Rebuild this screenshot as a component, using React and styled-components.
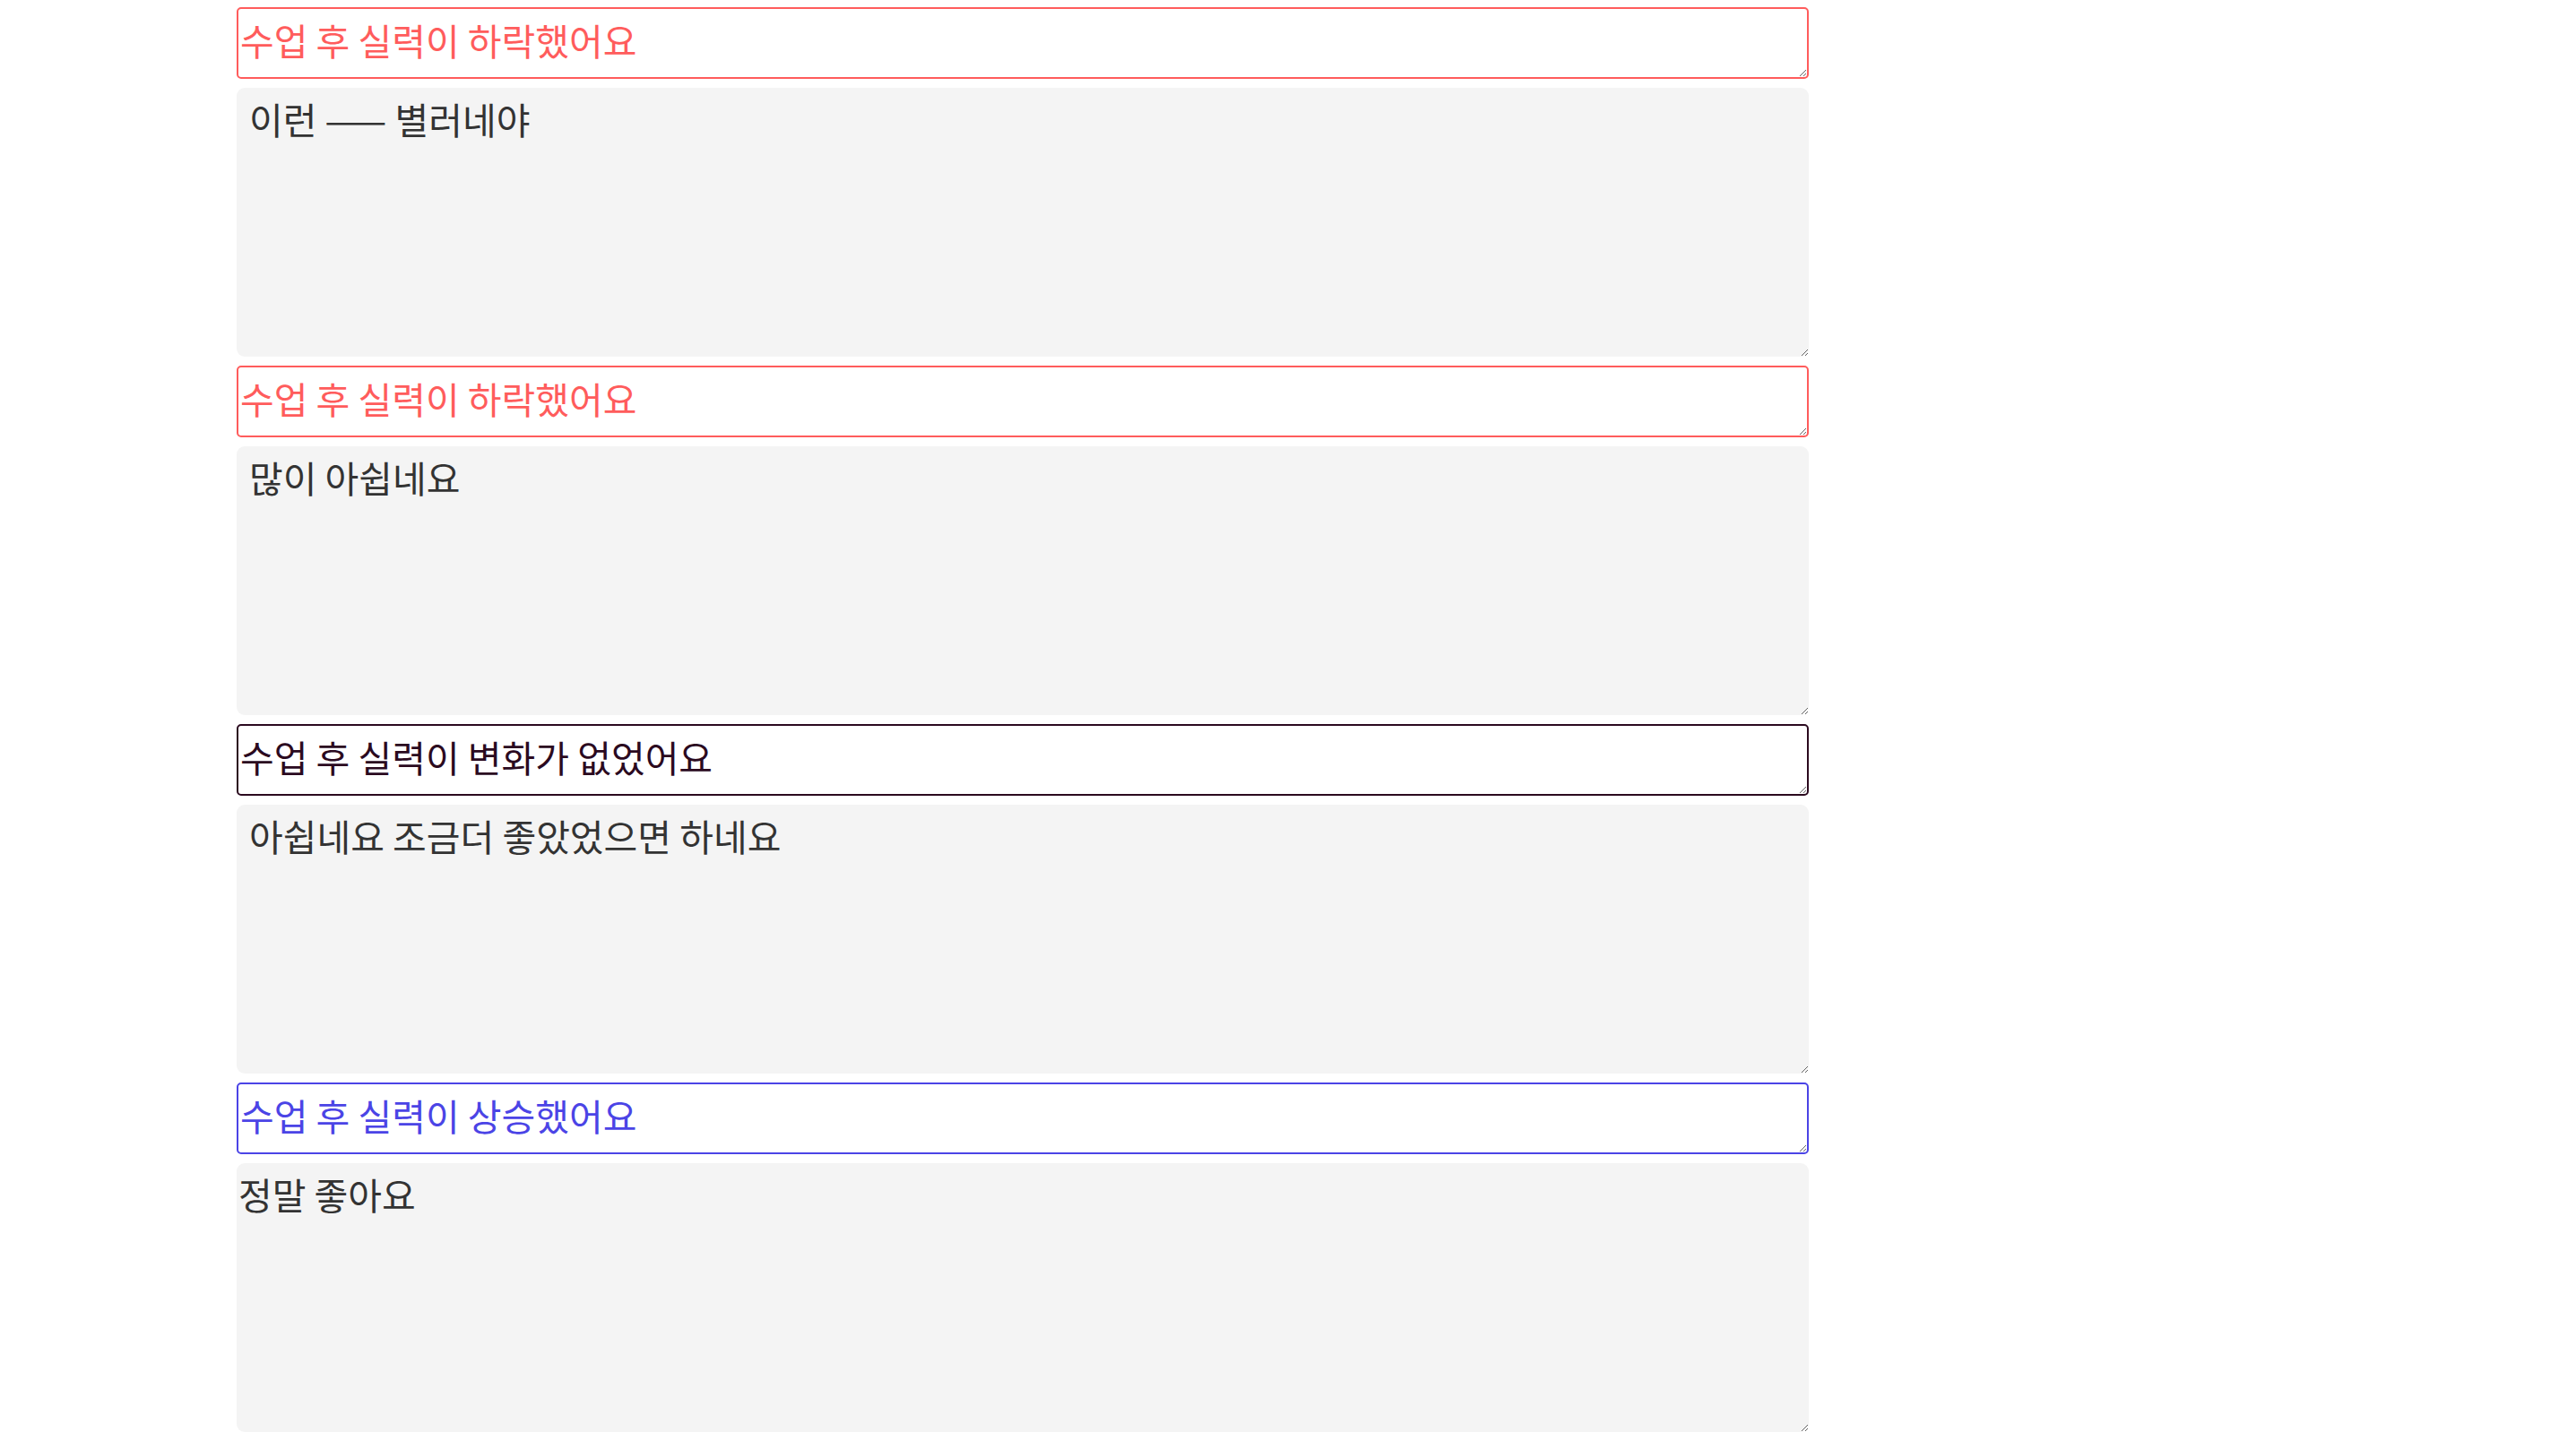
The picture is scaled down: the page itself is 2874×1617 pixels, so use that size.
import React from "react";
import styled, { createGlobalStyle } from "styled-components";

const GlobalStyle = createGlobalStyle`
  html, body { background: #ffffff; }
  body {
    margin: 8px;
    font-family: "Noto Sans CJK KR", "Noto Sans", sans-serif;
  }
`;

const List = styled.div`
  display: flex;
  flex-direction: column;
  gap: 10px;
  margin-left: 256px;
  width: 1754px;
`;

const Answer = styled.textarea`
  display: block;
  box-sizing: border-box;
  width: 100%;
  height: 80px;
  margin: 0;
  padding: 2px;
  border: 2px solid ${(p) => p.$tone};
  border-radius: 5px;
  background: #ffffff;
  color: ${(p) => p.$tone};
  font-family: "Noto Sans CJK KR", sans-serif;
  font-size: 41px;
  line-height: 64px;
  outline: none;
`;

const Comment = styled.textarea`
  display: block;
  box-sizing: border-box;
  width: 100%;
  height: 300px;
  margin: 0;
  padding: 2px 2px 2px ${(p) => p.$indent}px;
  border: none;
  border-radius: 9px;
  background: #f4f4f4;
  color: #333333;
  font-family: "Noto Sans CJK KR", sans-serif;
  font-size: 41px;
  line-height: 64px;
  outline: none;
`;

const tones = {
  down: "#ff5c5c",
  same: "#2b0a1f",
  up: "#4b44e6",
};

const entries = [
  { result: "수업 후 실력이 하락했어요", tone: "down", comment: "이런 —— 별러네야", indent: 14 },
  { result: "수업 후 실력이 하락했어요", tone: "down", comment: "많이 아쉽네요", indent: 14 },
  { result: "수업 후 실력이 변화가 없었어요", tone: "same", comment: "아쉽네요 조금더 좋았었으면 하네요", indent: 14 },
  { result: "수업 후 실력이 상승했어요", tone: "up", comment: "정말 좋아요", indent: 2 },
];

export default function App() {
  return (
    <>
      <GlobalStyle />
      <List>
        {entries.map((e, i) => (
          <React.Fragment key={i}>
            <Answer $tone={tones[e.tone]} defaultValue={e.result} />
            <Comment $indent={e.indent} defaultValue={e.comment} />
          </React.Fragment>
        ))}
      </List>
    </>
  );
}
